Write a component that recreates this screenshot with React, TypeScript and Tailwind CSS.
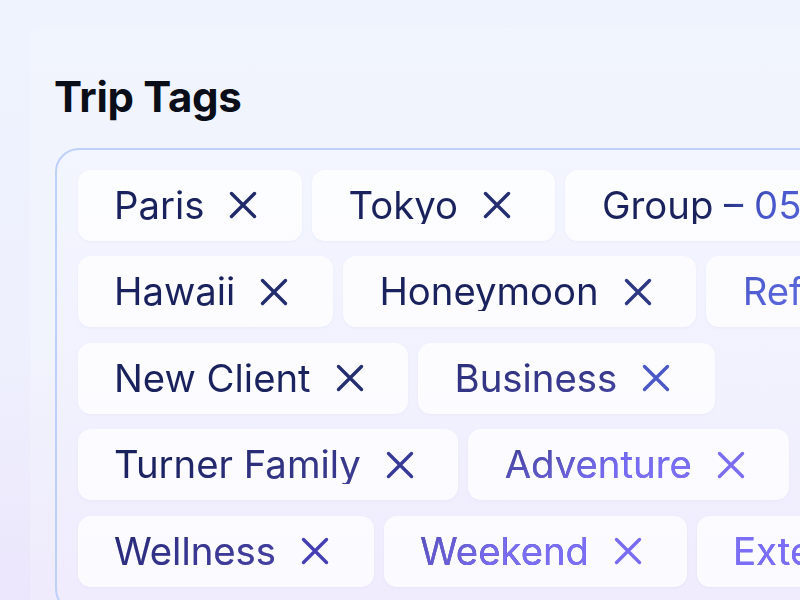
import React from "react";

type Tag = { label: string; x: string };

const rows: Tag[][] = [
  [
    { label: "Paris", x: "#212a69" },
    { label: "Tokyo", x: "#252e70" },
    { label: "Group – 05", x: "#5a6adb" },
  ],
  [
    { label: "Hawaii", x: "#232c6d" },
    { label: "Honeymoon", x: "#2d3884" },
    { label: "Referral", x: "#6a72e6" },
  ],
  [
    { label: "New Client", x: "#252e6f" },
    { label: "Business", x: "#4a57c7" },
  ],
  [
    { label: "Turner Family", x: "#363a96" },
    { label: "Adventure", x: "#7b6cf2" },
  ],
  [
    { label: "Wellness", x: "#463eb4" },
    { label: "Weekend", x: "#7a6cf0" },
    { label: "Extended Stay", x: "#7c6df6" },
  ],
];

const textGradient =
  "bg-fixed bg-clip-text text-transparent bg-[image:radial-gradient(ellipse_700px_320px_at_100%_100%,#7c6df6_0%,#7c6df6_45%,rgba(124,109,246,0.45)_62%,rgba(124,109,246,0.2)_88%,rgba(124,109,246,0)_100%),linear-gradient(to_bottom,rgba(80,64,190,0)_76%,rgba(80,64,190,0.35)_95%),linear-gradient(120deg,#1a225e_0%,#1a225e_72%,#4756cb_77%,#5a6adb_86%,#6d6ff0_100%)]";

function XIcon({ color }: { color: string }) {
  return (
    <svg width="28" height="28" viewBox="0 0 28 28" fill="none" className="shrink-0">
      <path
        d="M2.5 2.5 L25.5 25.5 M25.5 2.5 L2.5 25.5"
        stroke={color}
        strokeWidth="3.4"
        strokeLinecap="round"
      />
    </svg>
  );
}

function Chip({ tag }: { tag: Tag }) {
  return (
    <div className="flex h-[71px] shrink-0 items-center gap-[25px] whitespace-nowrap rounded-[13px] bg-white/75 pl-[36.5px] pr-[44.5px] shadow-[0_1px_3px_rgba(90,90,170,0.05)]">
      <span className={`text-[38.3px] leading-none ${textGradient}`}>{tag.label}</span>
      <XIcon color={tag.x} />
    </div>
  );
}

export default function App() {
  return (
    <div
      className="h-[600px] w-[800px] overflow-hidden bg-[linear-gradient(180deg,#eef3fe_0%,#eef1fd_55%,#ece6fc_100%)] pl-[30px] pt-[28px]"
      style={{ fontFamily: "Inter, 'Noto Sans', sans-serif" }}
    >
      <div className="w-[1100px] rounded-tl-[6px] bg-white/20 pl-[25px] pt-[45px] pb-[40px]">
        <h1 className="-ml-[1px] text-[42px] font-bold leading-[48px] tracking-[-0.3px] text-[#0a0e18]">
          Trip Tags
        </h1>
        <div className="mt-[27px] flex w-[1040px] flex-col gap-[15.5px] rounded-[24px] border-[2.5px] border-[#bdd0fb] bg-[linear-gradient(180deg,rgba(243,246,255,0.7),rgba(240,236,254,0.7))] pl-[20.5px] pt-[19.5px] pb-[24px]">
          {rows.map((row, i) => (
            <div key={i} className="flex gap-[10px]">
              {row.map((t) => (
                <Chip key={t.label} tag={t} />
              ))}
            </div>
          ))}
        </div>
      </div>
    </div>
  );
}
